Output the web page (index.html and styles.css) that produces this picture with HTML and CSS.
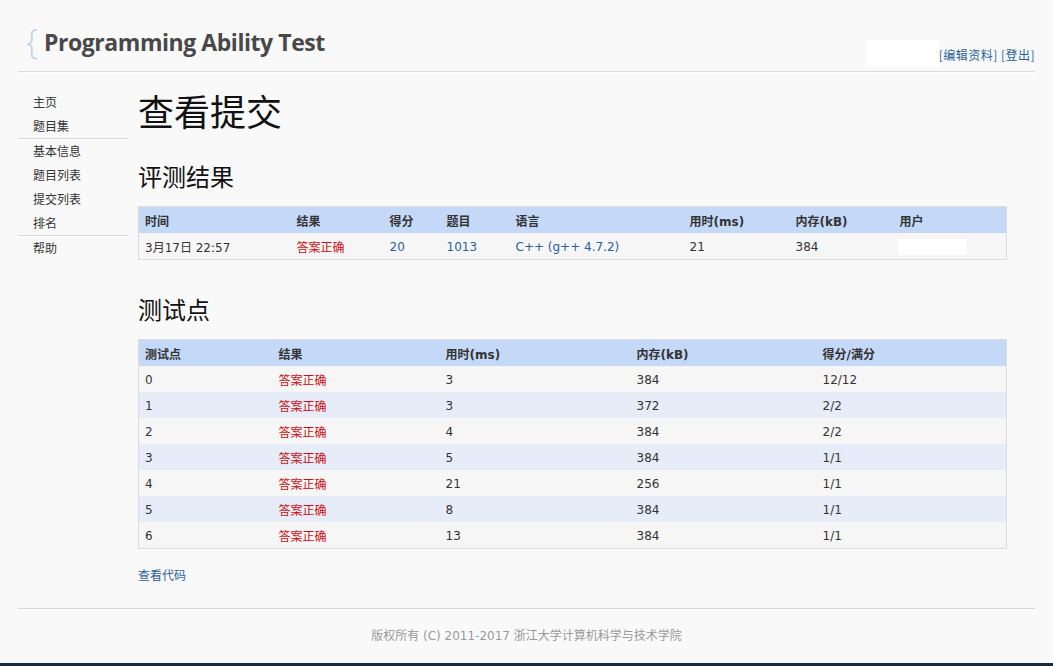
FILE: index.html
```html
<!DOCTYPE html>
<html lang="zh">
<head>
<meta charset="utf-8">
<title>查看提交</title>
<link rel="stylesheet" href="styles.css">
</head>
<body>
<div class="page">
  <header class="header">
    <div class="brand"><span class="brace">{</span><span class="brand-name">Programming Ability Test</span></div>
    <div class="userbar"><span class="userbox"></span><a href="#">[编辑资料]</a> <a href="#">[登出]</a></div>
  </header>
  <div class="body">
    <nav class="sidebar">
      <ul class="navgroup">
        <li><a href="#">主页</a></li>
        <li><a href="#">题目集</a></li>
      </ul>
      <ul class="navgroup">
        <li><a href="#">基本信息</a></li>
        <li><a href="#">题目列表</a></li>
        <li><a href="#">提交列表</a></li>
        <li><a href="#">排名</a></li>
      </ul>
      <ul class="navgroup">
        <li><a href="#">帮助</a></li>
      </ul>
    </nav>
    <main class="main">
      <h1 class="title">查看提交</h1>
      <h2 class="subtitle">评测结果</h2>
      <table class="grid result">
        <colgroup>
          <col style="width:152px"><col style="width:93px"><col style="width:57px"><col style="width:69px"><col style="width:174px"><col style="width:106px"><col style="width:104px"><col>
        </colgroup>
        <thead>
          <tr><th>时间</th><th>结果</th><th>得分</th><th>题目</th><th>语言</th><th>用时(ms)</th><th>内存(kB)</th><th>用户</th></tr>
        </thead>
        <tbody>
          <tr><td>3月17日 22:57</td><td class="ok">答案正确</td><td><a href="#">20</a></td><td><a href="#">1013</a></td><td><a href="#">C++ (g++ 4.7.2)</a></td><td>21</td><td>384</td><td><span class="userbox small"></span></td></tr>
        </tbody>
      </table>
      <h2 class="subtitle second">测试点</h2>
      <table class="grid cases">
        <colgroup>
          <col style="width:134px"><col style="width:167px"><col style="width:191px"><col style="width:186px"><col>
        </colgroup>
        <thead>
          <tr><th>测试点</th><th>结果</th><th>用时(ms)</th><th>内存(kB)</th><th>得分/满分</th></tr>
        </thead>
        <tbody>
          <tr><td>0</td><td class="ok">答案正确</td><td>3</td><td>384</td><td>12/12</td></tr>
          <tr><td>1</td><td class="ok">答案正确</td><td>3</td><td>372</td><td>2/2</td></tr>
          <tr><td>2</td><td class="ok">答案正确</td><td>4</td><td>384</td><td>2/2</td></tr>
          <tr><td>3</td><td class="ok">答案正确</td><td>5</td><td>384</td><td>1/1</td></tr>
          <tr><td>4</td><td class="ok">答案正确</td><td>21</td><td>256</td><td>1/1</td></tr>
          <tr><td>5</td><td class="ok">答案正确</td><td>8</td><td>384</td><td>1/1</td></tr>
          <tr><td>6</td><td class="ok">答案正确</td><td>13</td><td>384</td><td>1/1</td></tr>
        </tbody>
      </table>
      <p class="codelink"><a href="#">查看代码</a></p>
    </main>
  </div>
  <footer class="footer">版权所有 (C) 2011-2017 浙江大学计算机科学与技术学院</footer>
</div>
<div class="bottombar"></div>
</body>
</html>
```
FILE: styles.css
```css
html, body {
  margin: 0;
  padding: 0;
  background: #f9f9f9;
}
body {
  font-family: "DejaVu Sans", Verdana, "Noto Sans CJK SC", sans-serif;
  font-size: 12px;
  color: #333;
  height: 666px;
  overflow: hidden;
  position: relative;
}
a {
  color: #2a5f9e;
  text-decoration: none;
}
.page {
  padding: 0 18px;
}
.header {
  display: flex;
  justify-content: space-between;
  align-items: flex-end;
  height: 71px;
  border-bottom: 1px solid #dcdcdc;
  box-shadow: 0 1px 0 #fff;
}
.brand {
  display: flex;
  align-items: center;
  align-self: flex-start;
  margin-top: 25px;
  padding-left: 8px;
}
.brace {
  font-family: "Open Sans", sans-serif;
  font-weight: 300;
  font-size: 34px;
  line-height: 34px;
  color: #c2d3e8;
  margin-right: 6px;
  position: relative;
  top: -1px;
}
.brand-name {
  font-family: "Open Sans", sans-serif;
  font-weight: 700;
  font-size: 23px;
  letter-spacing: -0.45px;
  color: #484848;
}
.userbar {
  display: flex;
  align-items: center;
  margin-bottom: 3px;
  font-family: "Noto Sans CJK SC", sans-serif;
  font-size: 12px;
  letter-spacing: 0.5px;
}
.userbar a {
  margin-left: 3px;
}
.userbar a:first-of-type {
  margin-left: 0;
}
.userbar .userbox {
  position: relative;
  top: -1px;
}
.userbox {
  display: inline-block;
  width: 73px;
  height: 27px;
  background: #fff;
}
.userbox.small {
  width: 69px;
  height: 16px;
  vertical-align: middle;
  margin-left: -2px;
  top: 0;
}
.body {
  display: flex;
  padding-top: 18px;
  min-height: 518px;
}
.sidebar {
  width: 110px;
  flex: none;
}
.navgroup {
  list-style: none;
  margin: 0;
  padding: 0;
  border-bottom: 1px solid #d8d8d8;
  box-shadow: 0 1px 0 #fff;
}
.navgroup:last-child {
  border-bottom: none;
  box-shadow: none;
}
.navgroup li {
  height: 24px;
  line-height: 24px;
  padding-left: 15px;
  font-family: "Noto Sans CJK SC", sans-serif;
}
.navgroup a {
  color: #333;
}
.main {
  flex: 1;
  padding-left: 10px;
  padding-right: 28px;
}
.title {
  font-family: "Noto Sans CJK SC", sans-serif;
  font-weight: 400;
  font-size: 36px;
  line-height: 40px;
  margin: 0;
  color: #111;
}
.subtitle {
  font-family: "Noto Sans CJK SC", sans-serif;
  font-weight: 400;
  font-size: 24px;
  line-height: 30px;
  margin: 31px 0 15px;
  color: #111;
}
.subtitle.second {
  margin-top: 34px;
  margin-bottom: 15px;
}
.grid {
  width: 100%;
  border-collapse: collapse;
  table-layout: fixed;
  border: 1px solid #dcdcdc;
}
.grid th, .grid td {
  height: 26px;
  padding: 0 6px;
  text-align: left;
  white-space: nowrap;
  overflow: hidden;
}
.grid td {
  height: 25px;
  padding-top: 1px;
}
.grid th {
  background: #c4d9f8;
  font-weight: 700;
  color: #333;
}
.grid td.ok {
  font-family: "Noto Sans CJK SC", sans-serif;
}
.grid tbody tr:nth-child(odd) td {
  background: #f6f6f6;
}
.grid tbody tr:nth-child(even) td {
  background: #e6edf9;
}
.grid td.ok {
  color: #d01010;
}
.codelink {
  margin: 17px 0 0;
}
.footer {
  border-top: 1px solid #d8d8d8;
  box-shadow: inset 0 1px 0 #fff;
  text-align: center;
  color: #999;
  padding-top: 17px;
  height: 35px;
}
.bottombar {
  position: absolute;
  left: 0;
  right: 0;
  bottom: 0;
  height: 3px;
  background: #1b2a3a;
}
```
